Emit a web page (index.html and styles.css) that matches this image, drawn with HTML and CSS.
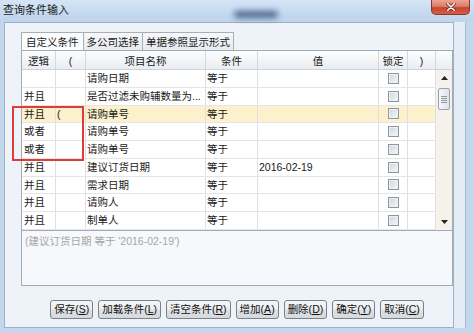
FILE: index.html
```html
<!DOCTYPE html>
<html lang="zh-CN">
<head>
<meta charset="utf-8">
<title>查询条件输入</title>
<link rel="stylesheet" href="styles.css">
</head>
<body>
<div class="titlebar">
  <span class="title">查询条件输入</span>
  <span class="blob"></span>
  <div class="close">
    <svg width="10" height="8" viewBox="0 0 10 8"><path d="M1.5 0.5 L8.5 7.5 M8.5 0.5 L1.5 7.5" stroke="#5a1a10" stroke-width="3" stroke-linecap="round"/><path d="M1.5 0.5 L8.5 7.5 M8.5 0.5 L1.5 7.5" stroke="#ffffff" stroke-width="1.6" stroke-linecap="round"/></svg>
  </div>
</div>
<div class="frame">
  <div class="client">
    <div class="tabs">
      <div class="tab active">自定义条件</div>
      <div class="tab">多公司选择</div>
      <div class="tab">单据参照显示形式</div>
    </div>
    <div class="grid">
      <div class="ghead">
        <div class="hc c1">逻辑</div>
        <div class="hc c2">(</div>
        <div class="hc c3">项目名称</div>
        <div class="hc c4">条件</div>
        <div class="hc c5">值</div>
        <div class="hc c6">锁定</div>
        <div class="hc c7">)</div>
        <div class="hc cs"></div>
      </div>
      <div class="gbody">
        <div class="rows">
          <div class="row"><div class="cell c1"></div><div class="cell c2"></div><div class="cell c3">请购日期</div><div class="cell c4">等于</div><div class="cell c5"></div><div class="cell c6"><span class="chk"></span></div><div class="cell c7"></div></div>
          <div class="row"><div class="cell c1">并且</div><div class="cell c2"></div><div class="cell c3">是否过滤未购辅数量为...</div><div class="cell c4">等于</div><div class="cell c5"></div><div class="cell c6"><span class="chk"></span></div><div class="cell c7"></div></div>
          <div class="row sel"><div class="cell c1">并且</div><div class="cell c2">(</div><div class="cell c3">请购单号</div><div class="cell c4">等于</div><div class="cell c5"></div><div class="cell c6"><span class="chk"></span></div><div class="cell c7"></div></div>
          <div class="row"><div class="cell c1">或者</div><div class="cell c2"></div><div class="cell c3">请购单号</div><div class="cell c4">等于</div><div class="cell c5"></div><div class="cell c6"><span class="chk"></span></div><div class="cell c7"></div></div>
          <div class="row"><div class="cell c1">或者</div><div class="cell c2"></div><div class="cell c3">请购单号</div><div class="cell c4">等于</div><div class="cell c5"></div><div class="cell c6"><span class="chk"></span></div><div class="cell c7"></div></div>
          <div class="row"><div class="cell c1">并且</div><div class="cell c2"></div><div class="cell c3">建议订货日期</div><div class="cell c4">等于</div><div class="cell c5">2016-02-19</div><div class="cell c6"><span class="chk"></span></div><div class="cell c7"></div></div>
          <div class="row"><div class="cell c1">并且</div><div class="cell c2"></div><div class="cell c3">需求日期</div><div class="cell c4">等于</div><div class="cell c5"></div><div class="cell c6"><span class="chk"></span></div><div class="cell c7"></div></div>
          <div class="row"><div class="cell c1">并且</div><div class="cell c2"></div><div class="cell c3">请购人</div><div class="cell c4">等于</div><div class="cell c5"></div><div class="cell c6"><span class="chk"></span></div><div class="cell c7"></div></div>
          <div class="row"><div class="cell c1">并且</div><div class="cell c2"></div><div class="cell c3">制单人</div><div class="cell c4">等于</div><div class="cell c5"></div><div class="cell c6"><span class="chk"></span></div><div class="cell c7"></div></div>
        </div>
        <div class="vscroll">
          <div class="arrow"><svg width="7" height="4" viewBox="0 0 7 4"><path d="M0 4 L3.5 0 L7 4 Z" fill="#222"/></svg></div>
          <div class="thumb"><span class="grip"></span></div>
          <div class="track"></div>
          <div class="arrow"><svg width="7" height="4" viewBox="0 0 7 4"><path d="M0 0 L7 0 L3.5 4 Z" fill="#222"/></svg></div>
        </div>
      </div>
    </div>
    <div class="summary">(建议订货日期 等于 '2016-02-19')</div>
    <div class="buttons">
      <button class="btn">保存(<u>S</u>)</button>
      <button class="btn">加载条件(<u>L</u>)</button>
      <button class="btn">清空条件(<u>R</u>)</button>
      <button class="btn">增加(<u>A</u>)</button>
      <button class="btn">删除(<u>D</u>)</button>
      <button class="btn">确定(<u>Y</u>)</button>
      <button class="btn">取消(<u>C</u>)</button>
    </div>
  </div>
  <div class="strip"></div>
</div>
<div class="annot"></div>
</body>
</html>
```

FILE: styles.css
```css
* { box-sizing: border-box; margin: 0; padding: 0; }
html, body { width: 474px; height: 333px; overflow: hidden; }
body {
  background: #c4d6eb;
  font-family: "Liberation Sans", "Noto Sans CJK SC", sans-serif;
  font-size: 10.5px;
  color: #1a1a1a;
  position: relative;
}

.titlebar {
  height: 22px;
  display: flex;
  align-items: flex-start;
  position: relative;
  background: linear-gradient(to bottom, #d6e5f5 0%, #c6daf0 55%, #bed4ec 100%);
}
.title { font-size: 11px; line-height: 14px; margin: 3px 0 0 3px; color: #1b1b1b; }
.blob {
  position: absolute; left: 234px; top: 11px; width: 44px; height: 7px;
  background: #2b4673; filter: blur(3px); border-radius: 4px; opacity: .8;
}
.close {
  margin-left: auto; margin-right: 4px;
  width: 39px; height: 15px;
  border: 1px solid #8a3628; border-top: none;
  border-radius: 0 0 5px 5px;
  background: linear-gradient(#eaa493 0%, #dd7d68 45%, #c8442c 55%, #d2603f 100%);
  display: flex; justify-content: center; padding-top: 3px;
}

.frame { display: flex; height: 311px; padding-left: 4px; }
.client {
  width: 450px; height: 306px;
  border: 1px solid #9fb0c5;
  background: #eef3f9;
  padding: 9px 0 0 16px;
  display: flex; flex-direction: column;
}
.strip { width: 12px; height: 306px; background: #e4ecf6; border-right: 1px solid #a9bbd0; }

.tabs { display: flex; height: 18px; align-items: flex-end; }
.tab {
  height: 18px;
  border: 1px solid #a6aeb9; border-bottom: none;
  background: linear-gradient(#f7f8fa, #e7eaee);
  padding: 2px 3px 0;
  line-height: 15px;
  margin-left: -1px;
  white-space: nowrap;
}
.tab.active { margin-left: 0; padding: 2px 4px 0; background: #fbfcfd; }

.grid { width: 432px; border: 1px solid #a3abb6; border-bottom: none; background: #fff; }
.ghead {
  display: flex; height: 19px;
  border-bottom: 1px solid #cbd2da;
  background: linear-gradient(#fcfdfd, #eaedf1);
}
.hc {
  text-align: center; border-right: 1px solid #d2d8df;
  line-height: 16px; padding-top: 2px; white-space: nowrap;
}
.hc.cs { border-right: none; }

.c1 { width: 34px; }
.c2 { width: 30px; }
.c3 { width: 120px; }
.c4 { width: 52px; }
.c5 { width: 121px; }
.c6 { width: 29px; }
.c7 { width: 28px; }
.cs { width: 16px; }

.gbody { display: flex; }
.rows { width: 414px; }
.row { display: flex; height: 17.75px; border-bottom: 1px solid #e3e5e9; }
.row.sel { background: #fcf1cc; }
.cell {
  border-right: 1px solid #dde0e5;
  padding: 1px 0 0 2px;
  line-height: 15px;
  white-space: nowrap; overflow: hidden;
}
.cell.c2, .cell.c3, .cell.c4, .cell.c5 { padding-left: 1px; }
.cell.c6 { display: flex; justify-content: center; align-items: center; padding: 0 0 0 1px; }
.chk {
  width: 11px; height: 11px;
  border: 1px solid #8f959d;
  background: linear-gradient(135deg, #c9d3df 0%, #e4e9ef 55%, #f5f7f9 100%);
  box-shadow: inset 0 0 0 1px #eef1f4;
}

.vscroll {
  width: 16px; display: flex; flex-direction: column; align-items: center;
  background: #f4f2eb; border-left: 0;
}
.arrow { height: 16px; width: 16px; display: flex; justify-content: center; align-items: center; }
.thumb {
  width: 12px; height: 22px; margin-top: 2px;
  border: 1px solid #9aa3ae; border-radius: 2px;
  background: linear-gradient(to right, #f6f7f8, #dfe3e8);
  display: flex; justify-content: center; align-items: center;
}
.grip {
  width: 6px; height: 7px;
  background: repeating-linear-gradient(#8f98a3 0 1px, transparent 1px 2px);
}
.track { flex: 1; }

.summary {
  width: 432px; height: 56px;
  border: 1px solid #a3abb6;
  background: #f6f8fb;
  color: #a6a6a6;
  padding: 3px 3px;
  line-height: 15px;
}

.buttons { width: 432px; display: flex; justify-content: center; gap: 5px; margin-top: 14px; }
.btn {
  height: 19px;
  border: 1px solid #7c8188;
  border-radius: 3px;
  background: linear-gradient(#f5f6f7 0%, #eceef0 48%, #dfe2e5 52%, #d6d9dd 100%);
  padding: 0 3px;
  font: inherit;
  line-height: 16px;
  color: #111;
  white-space: nowrap;
}
.btn u { text-decoration: underline; text-underline-offset: 1px; }

.annot {
  position: absolute; left: 12px; top: 106px;
  width: 72px; height: 55px;
  border: 2px solid #e23a35;
}
```
